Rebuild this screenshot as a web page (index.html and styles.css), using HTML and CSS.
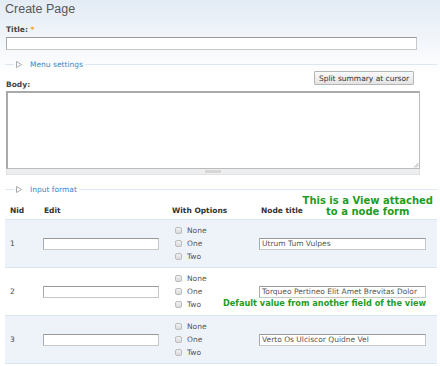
FILE: index.html
```html
<!DOCTYPE html>
<html>
<head>
<meta charset="utf-8">
<link rel="stylesheet" href="styles.css">
</head>
<body>
<div class="page">
  <h1 class="title">Create Page</h1>
  <div class="field">
    <label class="lbl">Title: <span class="req">*</span></label>
    <div class="text-input wide"></div>
  </div>
  <div class="legend legend-menu">
    <span class="seg"></span>
    <svg class="tri" width="6" height="7" viewBox="0 0 6 7"><path d="M0.5 0.5 L5.5 3.5 L0.5 6.5 Z" fill="none" stroke="#aaa" stroke-width="1"/></svg>
    <span class="legend-text">Menu settings</span>
    <span class="line"></span>
  </div>
  <div class="body-head">
    <label class="lbl body-lbl">Body:</label>
    <button class="btn">Split summary at cursor</button>
  </div>
  <div class="textarea">
    <svg class="resize" width="6" height="6" viewBox="0 0 6 6"><path d="M1 5.5 L5.5 1 M3 5.5 L5.5 3" stroke="#999" stroke-width="0.8"/></svg>
  </div>
  <div class="grippie"><span class="grip-handle"></span></div>
  <div class="legend legend-input">
    <span class="seg"></span>
    <svg class="tri" width="6" height="7" viewBox="0 0 6 7"><path d="M0.5 0.5 L5.5 3.5 L0.5 6.5 Z" fill="none" stroke="#aaa" stroke-width="1"/></svg>
    <span class="legend-text">Input format</span>
    <span class="line"></span>
  </div>
  <div class="view">
    <div class="note note-top">This is a View attached<br>to a node form</div>
    <div class="row head">
      <div class="cell nid">Nid</div>
      <div class="cell">Edit</div>
      <div class="cell opts-h">With Options</div>
      <div class="cell ntitle-h">Node title</div>
    </div>
    <div class="row odd">
      <div class="cell nid">1</div>
      <div class="cell"><div class="text-input small"></div></div>
      <div class="cell opts"><div class="opt"><span class="cb"></span>None</div><div class="opt"><span class="cb"></span>One</div><div class="opt"><span class="cb"></span>Two</div></div>
      <div class="cell ntitle"><div class="text-input nt">Utrum Tum Vulpes</div></div>
    </div>
    <div class="row even">
      <div class="cell nid">2</div>
      <div class="cell"><div class="text-input small"></div></div>
      <div class="cell opts"><div class="opt"><span class="cb"></span>None</div><div class="opt"><span class="cb"></span>One</div><div class="opt"><span class="cb"></span>Two</div></div>
      <div class="cell ntitle"><div class="text-input nt">Torqueo Pertineo Elit Amet Brevitas Dolor</div></div>
      <div class="note note-row">Default value from another field of the view</div>
    </div>
    <div class="row odd">
      <div class="cell nid">3</div>
      <div class="cell"><div class="text-input small"></div></div>
      <div class="cell opts"><div class="opt"><span class="cb"></span>None</div><div class="opt"><span class="cb"></span>One</div><div class="opt"><span class="cb"></span>Two</div></div>
      <div class="cell ntitle"><div class="text-input nt">Verto Os Ulciscor Quidne Vel</div></div>
    </div>
  </div>
</div>
</body>
</html>
```

FILE: styles.css
```css
html, body {
  margin: 0;
  padding: 0;
}
body {
  width: 440px;
  height: 366px;
  overflow: hidden;
  background: linear-gradient(to bottom, #e3ebf4 0px, #f4f7fb 45px, #ffffff 75px);
  font-family: "DejaVu Sans", Verdana, sans-serif;
  font-size: 7.5px;
  color: #494949;
}
.page {
  padding: 1px 0 0 5px;
  width: 432px;
}
.title {
  margin: 0;
  font-family: "Liberation Sans", Arial, sans-serif;
  font-weight: normal;
  font-size: 12.5px;
  line-height: 16px;
  color: #575757;
}
.field {
  margin-top: 8px;
  padding-left: 1px;
}
.lbl {
  display: block;
  font-weight: bold;
  color: #444;
  line-height: 9px;
}
.req {
  color: #f7a100;
}
.text-input {
  box-sizing: border-box;
  background: #fff;
  border: 1px solid #c8c8c8;
  border-top-color: #999;
  border-left-color: #aaa;
  color: #555;
  font-size: 7.5px;
  line-height: 10px;
  padding-left: 2px;
  white-space: nowrap;
  overflow: hidden;
}
.wide {
  margin-top: 3px;
  width: 411px;
  height: 13px;
}
.legend {
  display: flex;
  align-items: center;
  height: 12px;
}
.legend-menu {
  margin-top: 8px;
}
.legend-input {
  margin-top: 8px;
}
.seg {
  width: 9px;
  height: 1px;
  background: #dbe7f2;
}
.tri {
  margin-left: 2px;
  display: block;
}
.legend-text {
  margin-left: 8px;
  margin-right: 2px;
  color: #3a88cc;
}
.line {
  flex: 1;
  height: 1px;
  background: #dbe7f2;
}
.body-head {
  display: flex;
  justify-content: space-between;
  height: 18px;
  margin-top: 1px;
  padding-left: 1px;
  width: 408px;
}
.body-lbl {
  align-self: flex-end;
}
.btn {
  align-self: flex-start;
  box-sizing: border-box;
  height: 14px;
  width: 100px;
  padding: 0;
  font-family: "DejaVu Sans", Verdana, sans-serif;
  font-size: 7.5px;
  color: #333;
  background: linear-gradient(to bottom, #fafafa, #e4e4e4);
  border: 1px solid #b5b5b5;
  border-radius: 1px;
}
.textarea {
  position: relative;
  margin-top: 2px;
  margin-left: 1px;
  box-sizing: border-box;
  width: 414px;
  height: 78px;
  background: #fff;
  border: 1px solid #bbb;
  border-top: 2px solid #aaa;
  border-left: 2px solid #aaa;
}
.resize {
  position: absolute;
  right: 0;
  bottom: 0;
}
.grippie {
  margin-left: 1px;
  box-sizing: border-box;
  width: 414px;
  height: 6px;
  background: #eceeef;
  border: 1px solid #e2e2e2;
  border-top: none;
  display: flex;
  justify-content: center;
  align-items: center;
}
.grip-handle {
  width: 16px;
  height: 3px;
  background: #d6d6d6;
}
.view {
  position: relative;
  margin-top: 7px;
}
.note {
  position: absolute;
  color: #1f9c1f;
  font-weight: bold;
  text-align: center;
  white-space: nowrap;
  z-index: 1;
}
.note-top {
  right: 4px;
  top: -7px;
  font-size: 10px;
  line-height: 11px;
}
.note-row {
  left: 218px;
  bottom: 7px;
  font-size: 8.2px;
  line-height: 9px;
}
.row {
  position: relative;
  display: grid;
  grid-template-columns: 38px 128px 87px 1fr;
  align-items: center;
  height: 47px;
  border-bottom: 1px solid #d9e6f2;
}
.row.head {
  height: 18px;
  border-bottom: 1px solid #dbe7f3;
  font-weight: bold;
  color: #333;
  align-items: end;
  padding-bottom: 4px;
  box-sizing: border-box;
}
.row.odd {
  background: #edf3f9;
}
.row.even {
  background: #fff;
}
.cell {
  min-width: 0;
}
.nid {
  padding-left: 5px;
}
.head .cell:nth-child(2) {
  padding-left: 1px;
}
.opts-h {
  padding-left: 1px;
}
.ntitle-h {
  padding-left: 3px;
}
.small {
  width: 116px;
  height: 12px;
}
.opts {
  padding-left: 4px;
  display: flex;
  flex-direction: column;
}
.opt {
  display: flex;
  align-items: center;
  height: 13px;
  color: #555;
}
.cb {
  box-sizing: border-box;
  width: 7px;
  height: 7px;
  margin-right: 5px;
  border: 1px solid #bdbdbd;
  border-radius: 2px;
  background: linear-gradient(to bottom, #f2f2f2, #d9d9d9);
}
.ntitle {
  padding-left: 1px;
}
.nt {
  width: 167px;
  height: 12px;
}
```
